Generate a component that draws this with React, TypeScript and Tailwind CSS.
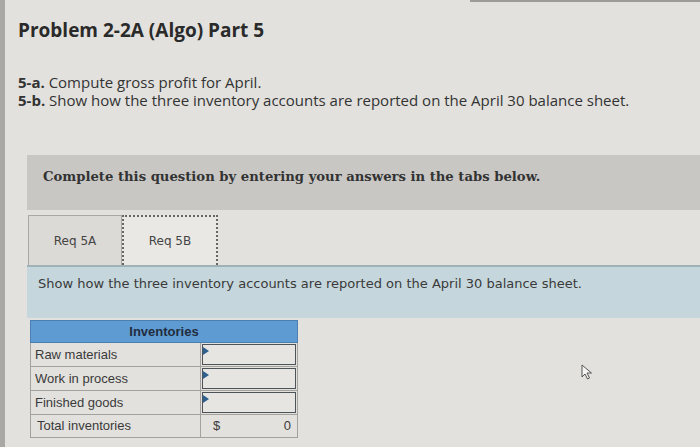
import React from "react";

function InputCell() {
  return (
    <div className="relative h-full border-[1.5px] border-[#4d5358] bg-[#e6e5e1]">
      <div className="absolute left-0 top-[2px] h-0 w-0 border-y-[4px] border-l-[6px] border-y-transparent border-l-[#2f5f8f]" />
    </div>
  );
}

export default function App() {
  const rows = ["Raw materials", "Work in process", "Finished goods"];
  return (
    <div className="relative h-[447px] w-[700px] overflow-hidden bg-[#e2e1dd]" style={{ fontFamily: '"Open Sans", sans-serif' }}>
      <div className="absolute left-0 top-0 h-full w-[5px] bg-[#a9a8a4]" />
      <div className="absolute right-0 top-0 h-[2px] w-[230px] bg-[#9c9b98]" />
      <div className="pl-[18px] pt-[17px]">
        <h1 className="text-[19px] font-bold leading-[26px] text-[#2a2a2a]">
          Problem 2-2A (Algo) Part 5
        </h1>
        <div className="mt-[30px] text-[15px] leading-[18px] text-[#333]">
          <div><span className="font-bold">5-a.</span> Compute gross profit for April.</div>
          <div><span className="font-bold">5-b.</span> Show how the three inventory accounts are reported on the April 30 balance sheet.</div>
        </div>
      </div>
      <div className="ml-[27px] mt-[46px]">
        <div className="flex h-[55px] items-start bg-[#c8c7c3] pl-[16px] pt-[12px] text-[13.2px] font-bold text-[#333]" style={{ fontFamily: '"DejaVu Serif", serif' }}>
          Complete this question by entering your answers in the tabs below.
        </div>
        <div className="mt-[5px] flex h-[50px] pl-[1px]">
          <div className="flex w-[94px] items-center justify-center border border-b-0 border-[#a9a8a4] bg-[#dcdad6] text-[12px] text-[#444]" style={{ fontFamily: '"DejaVu Sans", sans-serif' }}>
            Req 5A
          </div>
          <div className="flex w-[96px] items-center justify-center border-2 border-dotted border-[#666] border-b-0 bg-[#e9e8e4] text-[12px] text-[#444]" style={{ fontFamily: '"DejaVu Sans", sans-serif' }}>
            Req 5B
          </div>
        </div>
        <div className="flex h-[53px] items-start border-t-2 border-[#9fb2b8] bg-[#c5d7dc] pl-[11px] pt-[7px] text-[13px] text-[#3a3a3a]" style={{ fontFamily: '"DejaVu Sans", sans-serif' }}>
          Show how the three inventory accounts are reported on the April 30 balance sheet.
        </div>
        <div className="ml-[3px] mt-[2px] w-[268px] text-[13px] text-[#3a3a3a]" style={{ fontFamily: '"Liberation Sans", Arial, sans-serif' }}>
          <div className="flex h-[23px] items-center justify-center border border-[#4a7fb0] bg-[#5f9bd3] font-bold text-[#1f2d3d]">
            Inventories
          </div>
          {rows.map((r) => (
            <div key={r} className="grid h-[24px] grid-cols-[170px_1fr] border-x border-b border-[#a3a29e]">
              <div className="flex items-center border-r border-[#a3a29e] pl-[4px]">{r}</div>
              <div className="p-[1px]">
                <InputCell />
              </div>
            </div>
          ))}
          <div className="grid h-[23px] grid-cols-[170px_1fr] border-x border-b border-[#a3a29e]">
            <div className="flex items-center border-r border-[#a3a29e] pl-[6px]">Total inventories</div>
            <div className="flex items-center justify-between pl-[12px] pr-[6px]">
              <span>$</span>
              <span>0</span>
            </div>
          </div>
        </div>
      </div>
      <svg className="absolute left-[581px] top-[364px]" width="12" height="16" viewBox="0 0 12 16">
        <path d="M1 1 L1 13 L4 10 L6.5 15 L8.5 14 L6 9 L10.5 9 Z" fill="#f4f4f2" stroke="#555" strokeWidth="1" strokeLinejoin="round" />
      </svg>
    </div>
  );
}
